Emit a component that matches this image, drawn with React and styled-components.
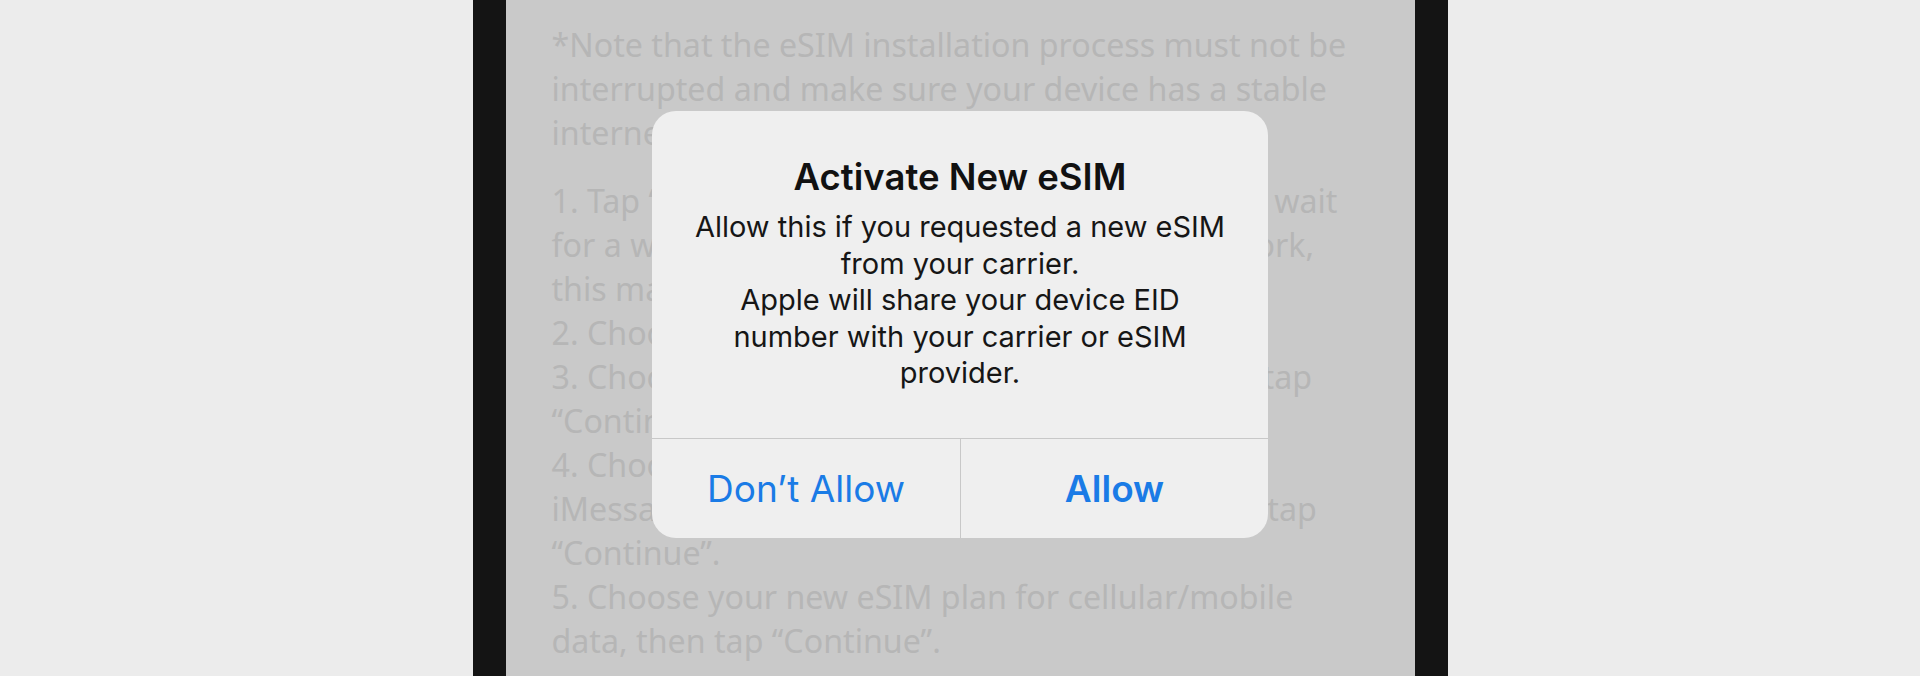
import React from "react";
import styled, { createGlobalStyle } from "styled-components";

const GlobalStyle = createGlobalStyle`
  html, body {
    margin: 0;
    padding: 0;
    background: #ececec;
  }
`;

const guide = [
  [
    "*Note that the eSIM installation process must not be",
    "interrupted and make sure your device has a stable",
    "internet connection.",
  ],
  [
    "1. Tap \u201cAllow\u201d on the pop-up window below and wait",
    "for a while to be connected to the mobile network,",
    "this may take a few minutes.",
    "2. Choose a label for your new eSIM.",
    "3. Choose your default line for voice calls, then tap",
    "\u201cContinue\u201d.",
    "4. Choose the line to use for",
    "iMessage and FaceTime on the new eSIM, then tap",
    "\u201cContinue\u201d.",
    "5. Choose your new eSIM plan for cellular/mobile",
    "data, then tap \u201cContinue\u201d.",
  ],
];

export default function App() {
  return (
    <>
      <GlobalStyle />
      <Page>
        <Phone>
          <Guide>
            {guide.map((para, i) => (
              <Para key={i}>
                {para.map((line, j) => (
                  <Line key={j}>{line}</Line>
                ))}
              </Para>
            ))}
          </Guide>

          <Overlay>
            <Alert>
              <AlertBody>
                <Title>Activate New eSIM</Title>
                <Message>
                  Allow this if you requested a new eSIM
                  <br />
                  from your carrier.
                  <br />
                  Apple will share your device EID
                  <br />
                  number with your carrier or eSIM
                  <br />
                  provider.
                </Message>
              </AlertBody>
              <Actions>
                <Action>Don’t Allow</Action>
                <Action $primary>Allow</Action>
              </Actions>
            </Alert>
          </Overlay>
        </Phone>
      </Page>
    </>
  );
}

// Styles
const Page = styled.div`
  height: 676px;
  display: flex;
  justify-content: center;
  overflow: hidden;
  background: #ececec;
`;

const Phone = styled.div`
  position: relative;
  width: 909px;
  border-left: 33px solid #141414;
  border-right: 33px solid #141414;
  background: #c9c9c9;
`;

const Guide = styled.div`
  padding: 23px 0 0 46px;
  display: flex;
  flex-direction: column;
  gap: 24px;
  font-family: "Noto Sans", sans-serif;
  font-size: 32.2px;
  line-height: 44px;
  color: #b6b6b6;
  white-space: nowrap;
`;

const Para = styled.div``;

const Line = styled.span`
  display: block;
`;

const Overlay = styled.div`
  position: absolute;
  inset: 0;
  display: flex;
  justify-content: center;
  align-items: flex-start;
  padding-top: 111px;
`;

const Alert = styled.div`
  width: 616px;
  background: #efefef;
  border-radius: 24px;
  overflow: hidden;
  font-family: Inter, "Liberation Sans", sans-serif;
  text-align: center;
`;

const AlertBody = styled.div`
  padding: 44px 10px 46px;
`;

const Title = styled.div`
  font-size: 36.5px;
  line-height: 44px;
  font-weight: 600;
  color: #111111;
`;

const Message = styled.div`
  margin-top: 10px;
  font-size: 29px;
  line-height: 36.5px;
  color: #161616;
`;

const Actions = styled.div`
  display: grid;
  grid-template-columns: 1fr 1fr;
  height: 99px;
  border-top: 1px solid #c8c8c8;
`;

const Action = styled.div`
  display: flex;
  align-items: center;
  justify-content: center;
  font-size: 37px;
  font-weight: ${(p) => (p.$primary ? 600 : 400)};
  color: #1a7be6;

  & + & {
    border-left: 1px solid #c8c8c8;
  }
`;
